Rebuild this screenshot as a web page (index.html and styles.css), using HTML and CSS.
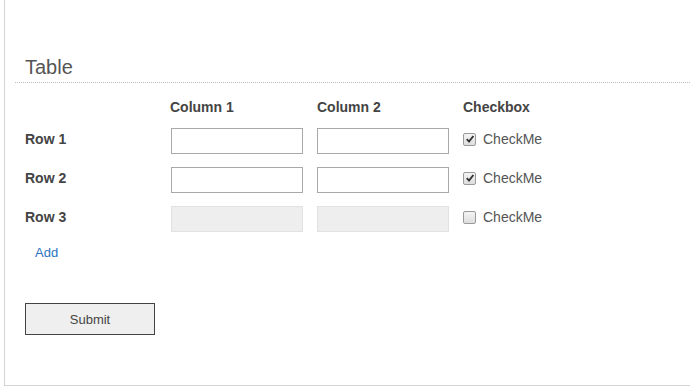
FILE: index.html
```html
<!DOCTYPE html>
<html>
<head>
<meta charset="utf-8">
<link rel="stylesheet" href="styles.css">
</head>
<body>
<div class="panel">
  <h2 class="title">Table</h2>
  <div class="grid head">
    <div></div>
    <div class="colhead">Column 1</div>
    <div class="colhead">Column 2</div>
    <div class="colhead">Checkbox</div>
  </div>
  <div class="grid rows">
    <div class="rowlabel">Row 1</div>
    <input class="field" type="text">
    <input class="field" type="text">
    <label class="check"><input type="checkbox" class="box" checked><span>CheckMe</span></label>

    <div class="rowlabel">Row 2</div>
    <input class="field" type="text">
    <input class="field" type="text">
    <label class="check"><input type="checkbox" class="box" checked><span>CheckMe</span></label>

    <div class="rowlabel">Row 3</div>
    <input class="field" type="text" disabled>
    <input class="field" type="text" disabled>
    <label class="check"><input type="checkbox" class="box"><span>CheckMe</span></label>
  </div>
  <a class="add" href="#">Add</a>
  <button class="submit" type="button">Submit</button>
</div>
</body>
</html>
```

FILE: styles.css
```css
html, body {
  margin: 0;
  padding: 0;
  background: #fff;
  font-family: "Liberation Sans", Arial, sans-serif;
}

.panel {
  margin-left: 4px;
  width: 700px;
  height: 386px;
  box-sizing: border-box;
  border-left: 1px solid #d4d4d4;
  border-bottom: 1px solid #d4d4d4;
  display: flex;
  flex-direction: column;
  align-items: flex-start;
}

.title {
  align-self: stretch;
  margin: 56px 0 0 10px;
  padding: 0 0 3px 10px;
  font-size: 20px;
  line-height: 23px;
  font-weight: normal;
  color: #555;
  border-bottom: 1px dotted #bbb;
}

.grid {
  display: grid;
  grid-template-columns: 146px 146px 146px 150px;
  margin-left: 20px;
  align-items: center;
}

.head {
  margin-top: 13px;
  height: 22px;
}

.colhead {
  font-size: 14px;
  font-weight: bold;
  color: #444;
}

.colhead:nth-child(2) {
  margin-left: -1px;
}

.rows {
  margin-top: 10px;
  grid-auto-rows: 26px;
  row-gap: 13px;
}

.rowlabel {
  font-size: 14px;
  font-weight: bold;
  color: #444;
  padding-bottom: 4px;
}

.field {
  width: 132px;
  height: 26px;
  box-sizing: border-box;
  margin: 0;
  border: 1px solid #a9a9a9;
  background: #fff;
  padding: 2px 4px;
  font: 13px "Liberation Sans", Arial, sans-serif;
}

.field:disabled {
  background: #eeeeee;
  border-color: #e2e2e2;
}

.check {
  display: flex;
  align-items: center;
  gap: 7px;
  font-size: 14px;
  color: #555;
  padding-bottom: 4px;
}

.box {
  appearance: none;
  -webkit-appearance: none;
  width: 13px;
  height: 13px;
  margin: 0;
  box-sizing: border-box;
  border: 1px solid #9a9a9a;
  border-radius: 2px;
  background: linear-gradient(#f4f4f4, #dedede);
}

.box:checked {
  background-image: url("data:image/svg+xml;utf8,<svg xmlns='http://www.w3.org/2000/svg' viewBox='0 0 10 10'><path d='M1.8 5.2 L4 7.6 L8.4 2' fill='none' stroke='%23333' stroke-width='1.9'/></svg>"), linear-gradient(#f4f4f4, #dedede);
  background-size: 10px 10px, auto;
  background-position: center, center;
  background-repeat: no-repeat;
}

.add {
  margin: 13px 0 0 30px;
  font-size: 13px;
  line-height: 15px;
  color: #2b73c2;
  text-decoration: none;
}

.submit {
  margin: 43px 0 0 20px;
  width: 130px;
  height: 32px;
  box-sizing: border-box;
  border: 1px solid #444;
  background: #efefef;
  color: #444;
  font: 13px "Liberation Sans", Arial, sans-serif;
  padding: 0;
}
```
